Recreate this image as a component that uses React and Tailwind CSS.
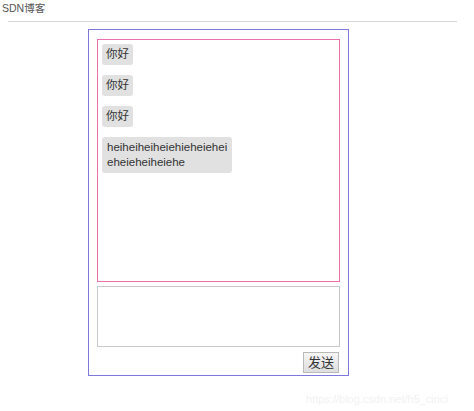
const messages = ['你好', '你好', '你好']

function Bubble({ children, className = '' }) {
  return (
    <div className={`w-fit rounded-[3px] bg-[#e1e1e1] px-[4px] py-[3px] text-[11.5px] leading-[15px] text-[#333] ${className}`}>
      {children}
    </div>
  )
}

export default function App() {
  return (
    <div className="relative h-[411px] w-[474px] overflow-hidden bg-white font-['Liberation_Sans','Noto_Sans_CJK_SC',sans-serif]">
      <div className="h-[21px] pl-[2px] pt-[2px] text-[10.5px] leading-[13px] text-[#555]">SDN博客</div>
      <div className="ml-[8px] h-[1px] w-[449px] bg-[#d6d6d6]" />

      <div className="ml-[88px] mt-[7px] flex h-[347px] w-[261px] flex-col border border-[#7d78e0] px-[8px] pb-[2px] pt-[9px]">
        <div className="flex h-[243px] w-[243px] shrink-0 flex-col gap-[10px] p-[5px] shadow-[inset_0_0_0_1px_#ec6fb0]">
          {messages.map((m, i) => (
            <Bubble key={i}>{m}</Bubble>
          ))}
          <Bubble className="px-[5px]">
            heiheiheiheiehieheiehei
            <br />
            eheieheiheiehe
          </Bubble>
        </div>
        <textarea className="mt-[4px] h-[61px] w-[243px] resize-none border border-[#c9c9c9] outline-none" />
        <div className="mt-[5px] flex justify-end pr-[1px]">
          <button className="h-[21px] w-[36px] border border-[#b9b9b9] bg-gradient-to-b from-[#f6f6f6] to-[#dedede] text-[13px] leading-[18px] text-[#333]">
            发送
          </button>
        </div>
      </div>

      <div className="absolute left-[306px] top-[391px] text-[11px] text-[#f2f2f2]">
        https://blog.csdn.net/h5_cinci
      </div>
    </div>
  )
}
